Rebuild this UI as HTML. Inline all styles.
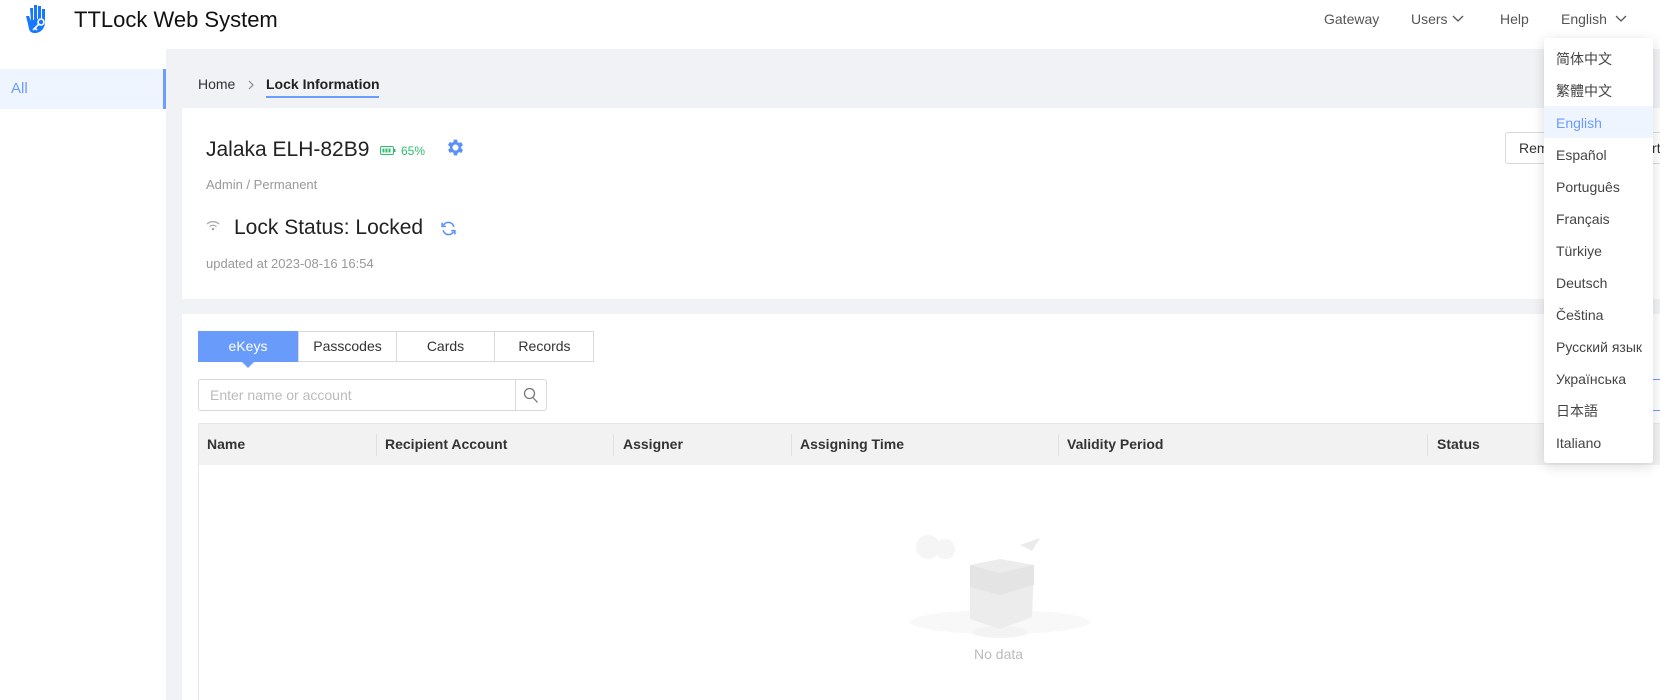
<!DOCTYPE html>
<html><head><meta charset="utf-8"><style>
*{margin:0;padding:0;box-sizing:border-box}
body{width:1660px;height:700px;overflow:hidden;background:#f0f2f5;font-family:"Liberation Sans","Noto Sans CJK SC",sans-serif;color:#333;position:relative}
.a{position:absolute;white-space:nowrap}
</style></head><body>
<div class="a" style="left:0;top:0;width:1660px;height:49px;background:#fff"></div>
<svg class="a" style="left:25px;top:4px" width="28" height="30" viewBox="0 0 28 30"><path d="M5 4h3v12h1V1h3v14h1V2h3v13h1V5h3v13c0 6-4 11-10 11S4 25 3 20L1 12h3l2 5z" fill="#1677ff"/><circle cx="16" cy="18" r="3" fill="none" stroke="#fff" stroke-width="1.6"/><path d="M14 20l-6 6M10 24l2 2" stroke="#fff" stroke-width="1.6"/></svg>
<div class="a" style="left:74px;top:7px;font-size:22px;color:#111">TTLock Web System</div>
<div class="a" style="left:1324px;top:11px;font-size:14px;color:#555">Gateway</div>
<div class="a" style="left:1411px;top:11px;font-size:14px;color:#555">Users</div>
<svg class="a" style="left:1452px;top:15px" width="12" height="8"><path d="M1 1l5 5 5-5" fill="none" stroke="#555" stroke-width="1.3"/></svg>
<div class="a" style="left:1500px;top:11px;font-size:14px;color:#555">Help</div>
<div class="a" style="left:1561px;top:11px;font-size:14px;color:#555">English</div>
<svg class="a" style="left:1615px;top:15px" width="12" height="8"><path d="M1 1l5 5 5-5" fill="none" stroke="#555" stroke-width="1.3"/></svg>

<div class="a" style="left:0;top:49px;width:166px;height:651px;background:#fff"></div>
<div class="a" style="left:0;top:69px;width:166px;height:40px;background:#eef5ff;border-right:3px solid #6b9cff"></div>
<div class="a" style="left:11px;top:80px;font-size:15px;color:#6b9cff">All</div>

<div class="a" style="left:198px;top:76px;font-size:14px;color:#333">Home</div>
<svg class="a" style="left:247px;top:80px" width="8" height="10"><path d="M2 1l4 4-4 4" fill="none" stroke="#888" stroke-width="1.2"/></svg>
<div class="a" style="left:266px;top:76px;font-size:14px;font-weight:bold;color:#222">Lock Information</div>
<div class="a" style="left:266px;top:96px;width:113px;height:2px;background:#6b9cff"></div>

<div class="a" style="left:182px;top:108px;width:1478px;height:191px;background:#fff"></div>
<div class="a" style="left:206px;top:138px;font-size:21px;color:#222">Jalaka ELH-82B9</div>
<svg class="a" style="left:380px;top:146px" width="16" height="9"><rect x="0.5" y="0.5" width="13" height="8" rx="1.5" fill="none" stroke="#2dbd6e"/><rect x="14" y="3" width="1.5" height="3" fill="#2dbd6e"/><rect x="2.5" y="2.5" width="2" height="4" fill="#2dbd6e"/><rect x="5.5" y="2.5" width="2" height="4" fill="#2dbd6e"/><rect x="8.5" y="2.5" width="2" height="4" fill="#2dbd6e"/></svg>
<div class="a" style="left:401px;top:144px;font-size:12px;color:#2dbd6e">65%</div>
<svg class="a" style="left:445px;top:137px" width="21" height="21" viewBox="0 0 24 24"><path fill="#5b8ff9" d="M19.4 13a7.5 7.5 0 000-2l2.1-1.6-2-3.5-2.5 1a7 7 0 00-1.7-1L15 3h-4l-.4 2.7a7 7 0 00-1.7 1l-2.5-1-2 3.5L6.6 11a7.5 7.5 0 000 2l-2.1 1.6 2 3.5 2.5-1a7 7 0 001.7 1L11 21h4l.4-2.7a7 7 0 001.7-1l2.5 1 2-3.5zM13 15.5a3.5 3.5 0 110-7 3.5 3.5 0 010 7z" transform="translate(-1 0)"/></svg>
<div class="a" style="left:206px;top:177px;font-size:13px;color:#999">Admin / Permanent</div>
<svg class="a" style="left:206px;top:220px" width="14" height="11" viewBox="0 0 14 11"><path d="M1 4a9 9 0 0112 0M3.5 6.5a5.5 5.5 0 017 0" fill="none" stroke="#aaa" stroke-width="1.3"/><circle cx="7" cy="9" r="1.3" fill="#aaa"/></svg>
<div class="a" style="left:234px;top:216px;font-size:21px;color:#222">Lock Status: Locked</div>
<svg class="a" style="left:440px;top:220px" width="17" height="17" viewBox="0 0 16 16"><path d="M13 6.5A5.2 5.2 0 003.3 5M3 9.5a5.2 5.2 0 009.7 1.5" fill="none" stroke="#5b8ff9" stroke-width="1.5"/><path d="M2 2.5v3.5h3.5M14 13.5V10h-3.5" fill="none" stroke="#5b8ff9" stroke-width="1.5"/></svg>
<div class="a" style="left:206px;top:256px;font-size:13px;color:#999">updated at 2023-08-16 16:54</div>
<div class="a" style="left:1505px;top:132px;width:200px;height:32px;border:1px solid #d9d9d9;border-radius:3px;font-size:14px;padding:7px 0 0 13px">Remote Unlock Report</div>

<div class="a" style="left:182px;top:314px;width:1478px;height:386px;background:#fff"></div>
<div class="a" style="left:198px;top:331px;width:396px;height:31px;border:1px solid #d9d9d9"></div>
<div class="a" style="left:198px;top:331px;width:100px;height:31px;background:#699bfa;color:#fff;font-size:14px;text-align:center;line-height:31px">eKeys</div>
<div class="a" style="left:242px;top:362px;width:0;height:0;border-left:6px solid transparent;border-right:6px solid transparent;border-top:6px solid #699bfa"></div>
<div class="a" style="left:298px;top:331px;width:98px;height:31px;border-left:1px solid #d9d9d9;font-size:14px;text-align:center;line-height:31px">Passcodes</div>
<div class="a" style="left:396px;top:331px;width:98px;height:31px;border-left:1px solid #d9d9d9;font-size:14px;text-align:center;line-height:31px">Cards</div>
<div class="a" style="left:494px;top:331px;width:100px;height:31px;border-left:1px solid #d9d9d9;font-size:14px;text-align:center;line-height:31px">Records</div>

<div class="a" style="left:198px;top:379px;width:349px;height:32px;border:1px solid #d9d9d9;border-radius:3px"></div>
<div class="a" style="left:515px;top:379px;width:1px;height:32px;background:#d9d9d9"></div>
<div class="a" style="left:210px;top:387px;font-size:14px;color:#bbb">Enter name or account</div>
<svg class="a" style="left:523px;top:387px" width="16" height="17"><circle cx="6.5" cy="6.5" r="5" fill="none" stroke="#777" stroke-width="1.3"/><path d="M10 10.5l4.5 5" stroke="#777" stroke-width="1.3"/></svg>
<div class="a" style="left:1640px;top:379px;width:60px;height:32px;border:1px solid #6b9cff;border-radius:3px;color:#6b9cff;font-size:14px;padding:7px 0 0 0;text-indent:-24px">Add</div>

<div class="a" style="left:198px;top:423px;width:1462px;height:42px;background:#f2f2f2;border-top:1px solid #e8e8e8"></div>
<div class="a" style="left:198px;top:423px;width:1px;height:277px;background:#e8e8e8"></div>
<div class="a" style="left:207px;top:436px;font-size:14px;font-weight:bold;color:#333">Name</div>
<div class="a" style="left:376px;top:434px;width:1px;height:22px;background:#e0e0e0"></div>
<div class="a" style="left:385px;top:436px;font-size:14px;font-weight:bold;color:#333">Recipient Account</div>
<div class="a" style="left:613px;top:434px;width:1px;height:22px;background:#e0e0e0"></div>
<div class="a" style="left:623px;top:436px;font-size:14px;font-weight:bold;color:#333">Assigner</div>
<div class="a" style="left:791px;top:434px;width:1px;height:22px;background:#e0e0e0"></div>
<div class="a" style="left:800px;top:436px;font-size:14px;font-weight:bold;color:#333">Assigning Time</div>
<div class="a" style="left:1058px;top:434px;width:1px;height:22px;background:#e0e0e0"></div>
<div class="a" style="left:1067px;top:436px;font-size:14px;font-weight:bold;color:#333">Validity Period</div>
<div class="a" style="left:1427px;top:434px;width:1px;height:22px;background:#e0e0e0"></div>
<div class="a" style="left:1437px;top:436px;font-size:14px;font-weight:bold;color:#333">Status</div>

<svg class="a" style="left:900px;top:532px" width="200" height="110" viewBox="0 0 200 110"><ellipse cx="100" cy="90" rx="90" ry="12" fill="#f8f8f8"/><ellipse cx="100" cy="100" rx="28" ry="6" fill="#f3f3f3"/><circle cx="28" cy="15" r="12" fill="#f5f5f5"/><circle cx="45" cy="17" r="10" fill="#f5f5f5"/><path d="M70 33l30-6 34 6-2 52-32 12-30-10z" fill="#ececec"/><path d="M70 33l30 8 34-8v20l-34 10-30-8z" fill="#e4e4e4"/><path d="M120 13l20-7-8 13z" fill="#ebebeb"/></svg>
<div class="a" style="left:974px;top:646px;font-size:14px;color:#bbb">No data</div>

<div class="a" style="left:1544px;top:38px;width:109px;height:425px;background:#fff;border-radius:3px;box-shadow:0 3px 12px rgba(0,0,0,.15)"></div>
<div class="a" style="left:1544px;top:106px;width:109px;height:32px;background:#eef5ff"></div>
<div class="a" style="left:1556px;top:43px;font-size:14px;color:#444;line-height:32px">
<div>简体中文</div><div>繁體中文</div><div style="color:#6b9cff">English</div><div>Español</div><div>Português</div><div>Français</div><div>Türkiye</div><div>Deutsch</div><div>Čeština</div><div>Русский язык</div><div>Українська</div><div>日本語</div><div>Italiano</div></div>
</body></html>
